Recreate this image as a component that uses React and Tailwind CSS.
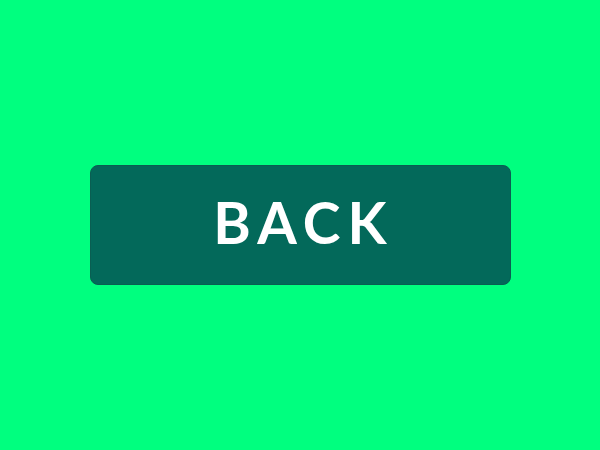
export default function App() {
  return (
    <div className="w-[600px] h-[450px] bg-[#00ff7f] flex items-center justify-center">
      <button className="w-[421px] h-[120px] rounded-lg bg-[#03695a] border border-[#0a5e52] flex items-center justify-center pb-[4px] text-white font-bold text-[57px] tracking-[0.125em] pl-[0.125em] font-['Lato',sans-serif]">
        BACK
      </button>
    </div>
  );
}
